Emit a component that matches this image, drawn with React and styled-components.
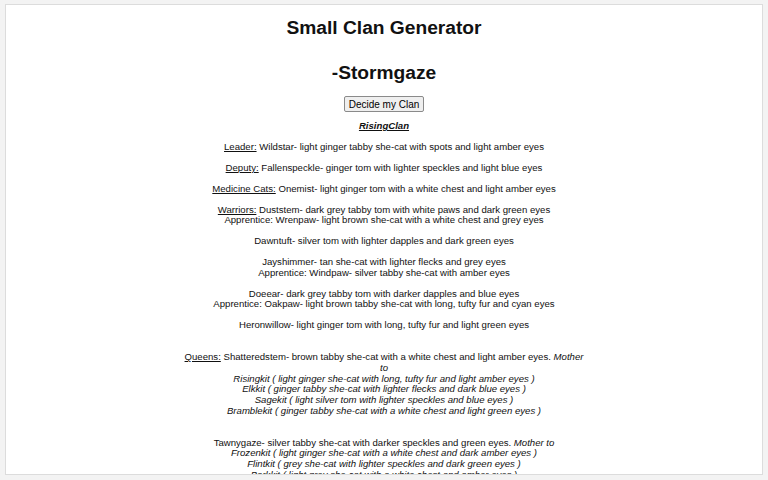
import React from 'react'
import styled, { createGlobalStyle } from 'styled-components'

const GlobalStyle = createGlobalStyle`
  html, body {
    margin: 0;
    padding: 0;
    background: #f3f3f3;
  }
  body {
    font-family: "Liberation Sans", Arial, sans-serif;
    color: #111;
  }
`

const Frame = styled.div`
  margin: 4px 5px 0 5px;
  height: 471px;
  background: #fff;
  border: 1px solid #dcdcdc;
  overflow: hidden;
  box-sizing: border-box;
`

const Content = styled.div`
  width: 400px;
  margin: 0 auto;
  text-align: center;
  display: flex;
  flex-direction: column;
  align-items: center;
`

const Title = styled.h1`
  font-size: 19.2px;
  line-height: 24px;
  font-weight: bold;
  margin: ${p => p.$top}px 0 0 0;
`

const DecideButton = styled.button`
  margin-top: 11px;
  height: 16px;
  padding: 0 4px;
  font-family: "Liberation Sans", Arial, sans-serif;
  font-size: 10px;
  color: #000;
  background: #efefef;
  border: 1px solid #8a8a8a;
  border-radius: 2px;
`

const ClanName = styled.p`
  margin: 8px 0 1px 0;
  font-size: 9.6px;
  line-height: 11px;
  font-weight: bold;
  font-style: italic;
  text-decoration: underline;
`

const Entry = styled.p`
  margin: ${p => (p.$gap ? 21 : 10.1)}px 0 0 0;
  font-size: 9.6px;
  line-height: 10.75px;
  width: 100%;
`

const Rank = styled.span`
  text-decoration: underline;
`

const Kits = styled.em`
  font-style: italic;
`

const cats = {
  queens: [
    {
      mother: 'Shatteredstem- brown tabby she-cat with a white chest and light amber eyes. ',
      rank: 'Queens:',
      kits: [
        'Risingkit ( light ginger she-cat with long, tufty fur and light amber eyes )',
        'Elkkit ( ginger tabby she-cat with lighter flecks and dark blue eyes )',
        'Sagekit ( light silver tom with lighter speckles and blue eyes )',
        'Bramblekit ( ginger tabby she-cat with a white chest and light green eyes )',
      ],
    },
    {
      mother: 'Tawnygaze- silver tabby she-cat with darker speckles and green eyes. ',
      kits: [
        'Frozenkit ( light ginger she-cat with a white chest and dark amber eyes )',
        'Flintkit ( grey she-cat with lighter speckles and dark green eyes )',
        'Barkkit ( light grey she-cat with a white chest and amber eyes )',
        'Ashkit ( dark grey tom with lighter flecks and blue eyes )',
      ],
    },
  ],
}

const App = () => {
  return (
    <>
      <GlobalStyle />
      <Frame>
        <Content>
          <Title $top={11}>Small Clan Generator</Title>
          <Title $top={21}>-Stormgaze</Title>
          <DecideButton>Decide my Clan</DecideButton>
          <ClanName>RisingClan</ClanName>
          <Entry>
            <Rank>Leader:</Rank> Wildstar- light ginger tabby she-cat with spots and light amber eyes
          </Entry>
          <Entry>
            <Rank>Deputy:</Rank> Fallenspeckle- ginger tom with lighter speckles and light blue eyes
          </Entry>
          <Entry>
            <Rank>Medicine Cats:</Rank> Onemist- light ginger tom with a white chest and light amber eyes
          </Entry>
          <Entry>
            <Rank>Warriors:</Rank> Duststem- dark grey tabby tom with white paws and dark green eyes
            <br />
            Apprentice: Wrenpaw- light brown she-cat with a white chest and grey eyes
          </Entry>
          <Entry>Dawntuft- silver tom with lighter dapples and dark green eyes</Entry>
          <Entry>
            Jayshimmer- tan she-cat with lighter flecks and grey eyes
            <br />
            Apprentice: Windpaw- silver tabby she-cat with amber eyes
          </Entry>
          <Entry>
            Doeear- dark grey tabby tom with darker dapples and blue eyes
            <br />
            Apprentice: Oakpaw- light brown tabby she-cat with long, tufty fur and cyan eyes
          </Entry>
          <Entry>Heronwillow- light ginger tom with long, tufty fur and light green eyes</Entry>
          {cats.queens.map((q, i) => (
            <Entry key={i} $gap>
              {q.rank && <Rank>{q.rank}</Rank>}
              {q.rank && ' '}
              {q.mother}
              <Kits>
                Mother to
                {q.kits.map((k, j) => (
                  <React.Fragment key={j}>
                    <br />
                    {k}
                  </React.Fragment>
                ))}
              </Kits>
            </Entry>
          ))}
        </Content>
      </Frame>
    </>
  )
}

export default App
